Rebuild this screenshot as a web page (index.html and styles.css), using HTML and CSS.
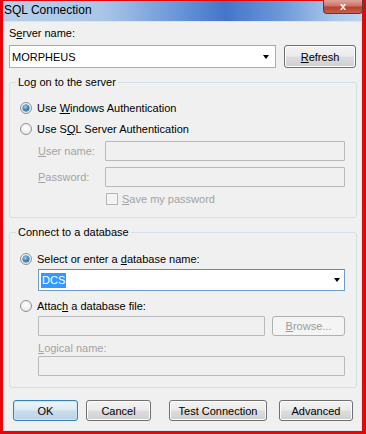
FILE: index.html
```html
<!DOCTYPE html>
<html lang="en">
<head>
    <meta charset="UTF-8">
    <title>SQL Connection</title>
    <link rel="stylesheet" href="styles.css">
</head>
<body>
    <div class="window">
        <div class="titlebar">
            <span class="title">SQL Connection</span>
            <span class="close">x</span>
        </div>
        <div class="client">
            <div class="label">S<u>e</u>rver name:</div>
            <div class="server-row">
                <div class="combo server">
                    <span>MORPHEUS</span>
                    <i class="arrow"></i>
                </div>
                <button class="btn refresh"><u>R</u>efresh</button>
            </div>

            <!--Credenciales-->
            <fieldset class="group logon">
                <legend>Log on to the server</legend>
                <div class="radio-row win"><span class="radio checked"></span><span>Use <u>W</u>indows Authentication</span></div>
                <div class="radio-row sql"><span class="radio"></span><span>Use S<u>Q</u>L Server Authentication</span></div>
                <div class="field-row user">
                    <label class="disabled"><u>U</u>ser name:</label>
                    <input disabled>
                </div>
                <div class="field-row pass">
                    <label class="disabled"><u>P</u>assword:</label>
                    <input disabled>
                </div>
                <div class="check-row">
                    <span class="check"></span>
                    <span class="disabled"><u>S</u>ave my password</span>
                </div>
            </fieldset>

            <!--Base de datos-->
            <fieldset class="group database">
                <legend>Connect to a database</legend>
                <div class="radio-row select"><span class="radio checked"></span><span>Select or enter a <u>d</u>atabase name:</span></div>
                <div class="combo db">
                    <span class="selected">DCS</span>
                    <i class="arrow"></i>
                </div>
                <div class="radio-row attach"><span class="radio"></span><span>Attac<u>h</u> a database file:</span></div>
                <div class="file-row">
                    <input disabled>
                    <button class="btn browse" disabled><u>B</u>rowse...</button>
                </div>
                <div class="label disabled logical"><u>L</u>ogical name:</div>
                <input class="logical-input" disabled>
            </fieldset>

            <div class="actions">
                <button class="btn ok">OK</button>
                <button class="btn cancel">Cancel</button>
                <button class="btn test">Test Connection</button>
                <button class="btn advanced">Advanced</button>
            </div>
        </div>
    </div>
</body>
</html>
```
FILE: styles.css
```css
* {
    box-sizing: border-box;
}

body {
    margin: 0;
    font-family: "Liberation Sans", Arial, sans-serif;
    font-size: 11px;
    color: #000;
    background: #fff;
}

.window {
    width: 366px;
    height: 434px;
    border: 3px solid #e3070b;
    border-top-width: 1px;
    border-right-width: 4px;
    border-bottom-width: 3px;
    display: flex;
    flex-direction: column;
    background: #f0f0f0;
}

.titlebar {
    height: 20px;
    display: flex;
    align-items: flex-start;
    background: linear-gradient(90deg, #b7cfea 0%, #a9c6e8 28%, #6b98d8 48%, #4475c8 62%, #6e9ad9 78%, #a9c7ea 92%, #bfd5ee 100%);
}

.title {
    font-size: 12px;
    line-height: 14px;
    padding: 2px 0 0 1px;
}

.close {
    margin-left: auto;
    margin-top: -1px;
    margin-right: -1px;
    width: 40px;
    height: 14px;
    border: 1px solid #70322b;
    border-top: none;
    border-radius: 0 0 4px 4px;
    background: linear-gradient(#dfa49b 0%, #cf7466 45%, #b8402e 55%, #c5604f 100%);
    color: #fff;
    font-weight: bold;
    font-size: 11px;
    line-height: 12px;
    text-align: center;
}

.client {
    flex: 1;
    border: 1px solid #dbe5f0;
    padding: 4px 4px 0 5px;
    display: flex;
    flex-direction: column;
}

.label {
    line-height: 14px;
}

.disabled {
    color: #a3a3a3;
}

.server-row {
    display: flex;
    margin-top: 5px;
}

.combo {
    height: 23px;
    background: #fff;
    border: 1px solid #abadb3;
    border-top-color: #a4a8ae;
    display: flex;
    align-items: center;
    padding: 0 6px 0 2px;

    span {
        flex: 1;
    }
}

.combo.server {
    width: 267px;
}

.arrow {
    width: 0;
    height: 0;
    border-left: 3.5px solid transparent;
    border-right: 3.5px solid transparent;
    border-top: 4px solid #000;
}

.btn {
    font: inherit;
    color: #000;
    height: 22px;
    padding: 0;
    border: 1px solid #707070;
    border-radius: 3px;
    background: linear-gradient(#f3f3f3 0%, #ebebeb 48%, #dddddd 52%, #cfcfcf 100%);
    box-shadow: inset 0 0 0 1px #fcfcfc;
}

.refresh {
    width: 72px;
    height: 23px;
    margin-left: 8px;
}

.group {
    margin: 7px 0 0;
    padding: 0 11px 0 10px;
    border: 1px solid #d5dfe5;
    border-radius: 3px;

    legend {
        padding: 0 2px;
        margin-left: -4px;
        line-height: 14px;
    }
}

.radio-row {
    display: flex;
    align-items: center;
    line-height: 16px;
    height: 16px;
}

.radio {
    width: 12px;
    height: 12px;
    border-radius: 50%;
    border: 1px solid #8f9295;
    background: radial-gradient(circle at 50% 40%, #ffffff 0%, #eceef0 60%, #d4d8dc 100%);
    margin-right: 5px;
    position: relative;
}

.radio.checked::after {
    content: "";
    position: absolute;
    left: 2px;
    top: 2px;
    width: 6px;
    height: 6px;
    border-radius: 50%;
    background: radial-gradient(circle at 40% 35%, #a8d8f5 0%, #3d8ccb 45%, #124b7c 100%);
    box-shadow: 0 0 0 0.5px #1e4f78;
}

.win {
    margin-top: 11px;
}

.sql {
    margin-top: 5px;
}

.field-row {
    display: flex;
    align-items: center;
    padding-left: 18px;

    label {
        width: 67px;
    }

    input {
        flex: 1;
    }
}

.user {
    margin-top: 4px;
}

.pass {
    margin-top: 6px;
}

input {
    height: 20px;
    font: inherit;
    border: 1px solid #b6babf;
    border-radius: 1px;
    background: #f0f0f0;
    padding: 0;
}

.check-row {
    display: flex;
    align-items: center;
    height: 16px;
    margin-top: 4px;
    margin-bottom: 10px;
    padding-left: 86px;
}

.check {
    width: 12px;
    height: 12px;
    border: 1px solid #b4b8bc;
    background: #f4f4f4;
    margin-right: 4px;
}

.select {
    margin-top: 12px;
}

.combo.db {
    height: 22px;
    margin-top: 2px;
    margin-left: 18px;
    padding-right: 4px;
    border-color: #6e9ccb;
    border-top-color: #5f8bbb;

    .selected {
        flex: none;
        background: #3399ff;
        color: #fff;
        padding: 0 1px;
        line-height: 15px;
    }

    .arrow {
        margin-left: auto;
    }
}

.attach {
    margin-top: 7px;
}

.file-row {
    display: flex;
    margin-top: 2px;
    margin-left: 18px;

    input {
        width: 227px;
    }
}

.browse {
    width: 73px;
    height: 20px;
    margin-left: 7px;
    color: #9b9b9b;
    border-color: #adb2b5;
    background: #f4f4f4;
    box-shadow: none;
}

.logical {
    margin: 5px 0 0 18px;
}

.logical-input {
    margin: 1px 0 11px 18px;
    width: calc(100% - 18px);
}

.actions {
    display: flex;
    margin-top: 12px;
    padding-left: 4px;

    .btn {
        height: 21px;
    }
}

.ok {
    width: 65px;
    border-color: #3c7fb1;
    background: linear-gradient(#eef5fa 0%, #dbe9f3 48%, #c8dceb 52%, #bcd4e6 100%);
    box-shadow: inset 0 0 0 1px #c9e6f7;
}

.cancel {
    width: 65px;
    margin-left: 8px;
}

.test {
    width: 98px;
    margin-left: 18px;
}

.advanced {
    width: 74px;
    margin-left: 12px;
}
```
